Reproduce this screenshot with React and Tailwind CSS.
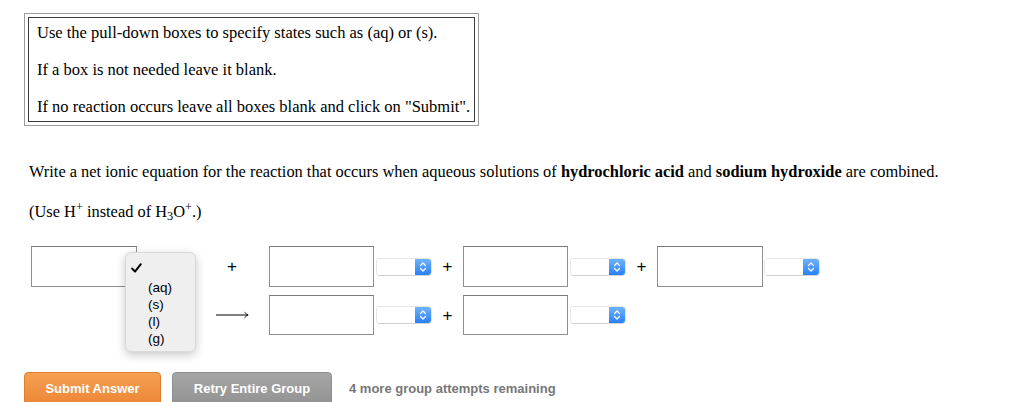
import React from 'react';

const serif = { fontFamily: '"Liberation Serif", "Times New Roman", serif' };
const sans = { fontFamily: '"Liberation Sans", Arial, Helvetica, sans-serif' };

const Chevrons = () => (
  <svg width="8" height="12" viewBox="0 0 8 12" fill="none">
    <path d="M1.5 4.5 L4 2 L6.5 4.5" stroke="white" strokeWidth="1.3" strokeLinecap="round" strokeLinejoin="round" />
    <path d="M1.5 7.5 L4 10 L6.5 7.5" stroke="white" strokeWidth="1.3" strokeLinecap="round" strokeLinejoin="round" />
  </svg>
);

const StateSelect = ({ className = '' }) => (
  <div className={`flex h-[18px] w-[56px] overflow-hidden rounded-[4px] border border-[#e6e6e6] border-b-[#d2d2d2] bg-white ${className}`}>
    <div className="flex-1 bg-white" />
    <div className="flex w-[16px] items-center justify-center bg-gradient-to-b from-[#6fb2fb] to-[#2581f5]">
      <Chevrons />
    </div>
  </div>
);

const Box = ({ w = 'w-[105px]', h = 'h-[41px]' }) => (
  <div className={`${w} ${h} border border-[#8e8e8e] border-t-[#7a7a7a] bg-white`} />
);

const Plus = ({ w }) => (
  <div className={`${w} flex items-center justify-center text-[17px] leading-none text-black`} style={sans}>
    +
  </div>
);

const Arrow = () => (
  <svg width="33" height="8" viewBox="0 0 33 8" fill="none">
    <path d="M0 4 H31.5" stroke="black" strokeWidth="1" />
    <path d="M28.5 1.2 Q30.5 3.4 32.2 4 Q30.5 4.6 28.5 6.8" stroke="black" strokeWidth="0.9" fill="none" />
  </svg>
);

const Check = () => (
  <svg width="11" height="10" viewBox="0 0 11 10" fill="none">
    <path d="M1.2 5.6 L4 8.6 L9.8 1.2" stroke="black" strokeWidth="2" strokeLinecap="round" strokeLinejoin="round" />
  </svg>
);

const Popup = () => (
  <div
    className="absolute left-[94px] top-[6px] w-[71px] rounded-[6px] border border-[#d9d9d9] bg-[#efefef] pt-[9px] pb-[4px] shadow-[0_3px_10px_rgba(0,0,0,0.22)]"
    style={sans}
  >
    <div className="relative h-[17px]">
      <div className="absolute left-[5px] top-[1px]">
        <Check />
      </div>
    </div>
    {['(aq)', '(s)', '(l)', '(g)'].map((s) => (
      <div key={s} className="h-[17px] pl-[22px] text-[13.5px] leading-[17px] text-black">
        {s}
      </div>
    ))}
  </div>
);

export default function App() {
  return (
    <div className="h-[402px] w-full overflow-hidden bg-white pt-[13px] text-black" style={serif}>
      {/* instructions */}
      <div className="ml-[24px] w-[455px] border border-[#9c9c9c] p-[3px]">
        <div className="border border-[#3c3c3c] pl-[8px] pt-[5px] pb-[4px] text-[16.5px] leading-[20px]">
          <p>Use the pull-down boxes to specify states such as (aq) or (s).</p>
          <p className="mt-[17px]">If a box is not needed leave it blank.</p>
          <p className="mt-[17px]">If no reaction occurs leave all boxes blank and click on "Submit".</p>
        </div>
      </div>

      {/* question */}
      <p className="ml-[29px] mt-[36px] text-[16.4px] leading-[20px]">
        Write a net ionic equation for the reaction that occurs when aqueous solutions of{' '}
        <b>hydrochloric acid</b> and <b>sodium hydroxide</b> are combined.
      </p>
      <p className="ml-[29px] mt-[20px] text-[16.4px] leading-[20px]">
        (Use H<sup>+</sup> instead of H<sub>3</sub>O<sup>+</sup>.)
      </p>

      {/* equation */}
      <div className="relative ml-[31px] mt-[24px]">
        <div className="flex h-[41px] items-center">
          <Box w="w-[106px]" />
          <StateSelect className="ml-[1px] w-[57px]" />
          <Plus w="w-[74px]" />
          <Box />
          <StateSelect className="ml-[2px]" />
          <Plus w="w-[31px]" />
          <Box />
          <StateSelect className="ml-[2px]" />
          <Plus w="w-[31px]" />
          <Box w="w-[106px]" />
          <StateSelect className="ml-[1px]" />
        </div>
        <div className="mt-[8px] flex h-[40px] items-center">
          <div className="w-[164px]" />
          <div className="flex w-[74px] items-center justify-center">
            <Arrow />
          </div>
          <Box h="h-[40px]" />
          <StateSelect className="ml-[2px]" />
          <Plus w="w-[31px]" />
          <Box h="h-[40px]" />
          <StateSelect className="ml-[2px]" />
        </div>
        <Popup />
      </div>

      {/* buttons */}
      <div className="ml-[24px] mt-[37px] flex items-center" style={sans}>
        <button className="h-[34px] w-[137px] rounded-[4px] border border-[#e27d2c] bg-gradient-to-b from-[#f5a052] to-[#ec8635] text-[13px] font-bold text-white">
          Submit Answer
        </button>
        <button className="ml-[11px] h-[34px] w-[160px] rounded-[4px] border border-[#8e8e8e] bg-gradient-to-b from-[#a6a6a6] to-[#929292] text-[13px] font-bold text-white">
          Retry Entire Group
        </button>
        <span className="ml-[17px] text-[13px] font-bold text-[#777777]">4 more group attempts remaining</span>
      </div>
    </div>
  );
}
